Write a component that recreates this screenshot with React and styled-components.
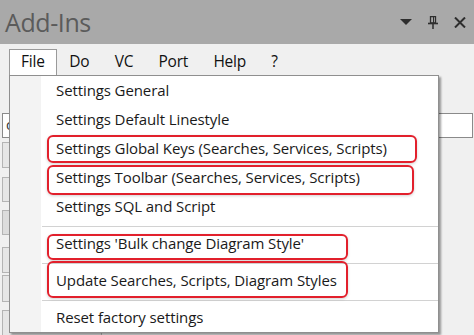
import React from 'react'
import styled, { createGlobalStyle } from 'styled-components'

const GlobalStyle = createGlobalStyle`
  html, body {
    margin: 0;
    padding: 0;
    background: #f0f0f0;
  }
  body {
    font-family: "Open Sans", "Noto Sans", "Liberation Sans", sans-serif;
  }
`

const Window = styled.div`
  width: 474px;
  height: 335px;
  overflow: hidden;
  position: relative;
  background: #f0f0f0;
  display: flex;
  flex-direction: column;
`

const TitleBar = styled.div`
  height: 44px;
  flex: none;
  background: #a9a9a9;
  display: flex;
  align-items: center;
  padding: 0 8px 0 5px;
`

const Title = styled.div`
  flex: 1;
  font-size: 25px;
  color: #5b5b5b;
  letter-spacing: -0.4px;
  margin-top: -1px;
`

const TitleIcons = styled.div`
  display: flex;
  align-items: center;
  gap: 16px;
  color: #2e2e2e;
`

const MenuBar = styled.div`
  height: 31px;
  flex: none;
  display: flex;
  align-items: flex-end;
  padding-left: 9px;
`

const MenuTab = styled.div`
  height: ${p => (p.$open ? '26px' : '25px')};
  padding: 0 ${p => (p.$open ? '11px' : '11.6px')};
  display: flex;
  align-items: center;
  font-size: 15.5px;
  letter-spacing: -0.2px;
  color: #111;
  background: ${p => (p.$open ? '#fff' : 'transparent')};
  border: 1px solid ${p => (p.$open ? '#9a9a9a' : 'transparent')};
  border-bottom: none;
  padding-bottom: 4px;
  box-sizing: border-box;
  position: relative;
  z-index: 3;
`

const Body = styled.div`
  flex: 1;
  padding: 38px 1px 0 2px;
  display: flex;
  flex-direction: column;
`

const TextBox = styled.div`
  height: 25px;
  box-sizing: border-box;
  background: #fff;
  border: 1px solid #8a8a8a;
  font-size: 14px;
  color: #333;
  padding-left: 3px;
  line-height: 22px;
`

const ButtonColumn = styled.div`
  display: flex;
  flex-direction: column;
`

const Button = styled.div`
  width: 100px;
  height: ${p => p.$height}px;
  margin-top: ${p => p.$gap}px;
  box-sizing: border-box;
  background: ${p => (p.$pressed ? '#dcdcdc' : '#e6e6e6')};
  border: 1px solid #b4b4b4;
`

const Dropdown = styled.div`
  position: absolute;
  left: 9px;
  top: 75px;
  width: 430px;
  height: 258px;
  box-sizing: border-box;
  border: 1px solid #8f8f8f;
  background: linear-gradient(to right, #f3f3f3 0, #f3f3f3 31px, #fff 31px);
  box-shadow: 2px 2px 2px rgba(0, 0, 0, 0.38);
  padding-top: 1px;
  z-index: 2;
`

const Item = styled.div`
  position: relative;
  height: 29px;
  box-sizing: border-box;
  display: flex;
  align-items: center;
  padding: 0 0 3px 46px;
  font-size: 15px;
  letter-spacing: -0.1px;
  color: #1a1a1a;
  white-space: nowrap;
`

const Separator = styled.div`
  height: 8px;
  display: flex;
  align-items: center;
  padding-left: 32px;

  &::after {
    content: '';
    flex: 1;
    height: 1px;
    background: #d2d2d2;
  }
`

const Mark = styled.div`
  position: absolute;
  left: 37px;
  top: ${p => p.$top}px;
  width: ${p => p.$width}px;
  height: ${p => p.$height}px;
  box-sizing: border-box;
  border: 2px solid #e2202c;
  border-radius: 6px;
  box-shadow: 0 1px 3px rgba(0, 0, 0, 0.18);
  pointer-events: none;
`

const menuTabs = ['File', 'Do', 'VC', 'Port', 'Help', '?']

const entries = [
  { label: 'Settings General' },
  { label: 'Settings Default Linestyle' },
  { label: 'Settings Global Keys (Searches, Services, Scripts)', mark: [0, 28, 370] },
  { label: 'Settings Toolbar (Searches, Services, Scripts)', mark: [1, 30, 367] },
  { label: 'Settings SQL and Script' },
  { sep: true },
  { label: "Settings 'Bulk change Diagram Style'", mark: [4, 26, 301] },
  { sep: true },
  { label: 'Update Searches, Scripts, Diagram Styles', mark: [-6, 37, 301] },
  { sep: true },
  { label: 'Reset factory settings' },
]

const buttons = [
  { gap: 4, height: 26 },
  { gap: 9, height: 25 },
  { gap: 8, height: 25, pressed: true },
  { gap: 12, height: 26 },
  { gap: 2, height: 27 },
  { gap: 8, height: 30 },
]

const DropIcon = () => (
  <svg width="12" height="6" viewBox="0 0 12 6">
    <path d="M0 0 H12 L6 6 Z" fill="currentColor" />
  </svg>
)

const PinIcon = () => (
  <svg width="10" height="13" viewBox="0 0 10 13">
    <path d="M2.5 0.5 H7.5 V7 H2.5 Z" fill="none" stroke="currentColor" strokeWidth="1.3" />
    <path d="M0 7.5 H10" stroke="currentColor" strokeWidth="1.6" />
    <path d="M5 8 V13" stroke="currentColor" strokeWidth="1.5" />
    <path d="M5.5 1 V7" stroke="currentColor" strokeWidth="1" />
  </svg>
)

const CloseIcon = () => (
  <svg width="12" height="11" viewBox="0 0 12 11">
    <path d="M1 0.5 L11 10.5 M11 0.5 L1 10.5" stroke="currentColor" strokeWidth="2" />
  </svg>
)

export default function App() {
  return (
    <>
      <GlobalStyle />
      <Window>
        <TitleBar>
          <Title>Add-Ins</Title>
          <TitleIcons>
            <DropIcon />
            <PinIcon />
            <CloseIcon />
          </TitleIcons>
        </TitleBar>
        <MenuBar>
          {menuTabs.map((t, i) => (
            <MenuTab key={t} $open={i === 0}>{t}</MenuTab>
          ))}
        </MenuBar>
        <Body>
          <TextBox>c</TextBox>
          <ButtonColumn>
            {buttons.map((b, i) => (
              <Button key={i} $gap={b.gap} $height={b.height} $pressed={b.pressed} />
            ))}
          </ButtonColumn>
        </Body>
        <Dropdown>
          {entries.map((e, i) =>
            e.sep ? (
              <Separator key={i} />
            ) : (
              <Item key={i}>
                {e.label}
                {e.mark && <Mark $top={e.mark[0]} $height={e.mark[1]} $width={e.mark[2]} />}
              </Item>
            )
          )}
        </Dropdown>
      </Window>
    </>
  )
}
